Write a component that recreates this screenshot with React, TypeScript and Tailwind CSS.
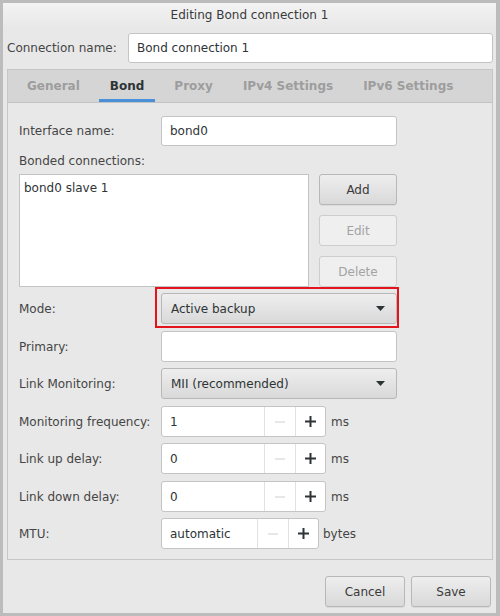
import React from 'react';

const tabs = ['General', 'Bond', 'Proxy', 'IPv4 Settings', 'IPv6 Settings'];

export default function App() {
  return (
    <div className="w-[500px] h-[616px] border-[3px] border-r-[4px] border-[#bcbcbc] bg-[#e8e8e8] flex flex-col font-['DejaVu_Sans',sans-serif] text-[12px] text-[#2e3436]">
      {/* Title bar */}
      <div className="h-[25px] shrink-0 flex items-center justify-center pb-[2px] bg-linear-to-b from-[#f3f3f3] to-[#e8e8e8] text-[#3a3a3a]">
        Editing Bond connection 1
      </div>

      {/* Connection name */}
      <div className="mt-[5px] ml-[4px] mr-[3px] flex items-center h-[30px] shrink-0">
        <div className="w-[121px] text-[#454545]">Connection name:</div>
        <div className="flex-1 h-full flex items-center px-[8px] bg-white border border-[#c4c4c4] rounded-[3px]">
          Bond connection 1
        </div>
      </div>

      {/* Notebook */}
      <div className="mt-[6px] ml-[4px] mr-[3px] flex-1 flex flex-col border border-[#c6c6c6]">
        <div className="h-[33px] shrink-0 flex items-stretch pl-[8px] gap-[8px] bg-[#d5d5d5] border-b border-[#c2c2c2]">
          {tabs.map((t) => (
            <div
              key={t}
              className={
                t === 'Bond'
                  ? 'px-[11px] flex items-center font-bold text-[#2e3436] border-b-[3px] border-[#4a90d9] pt-[3px]'
                  : 'px-[11px] flex items-center font-bold text-[#9d9d9d]'
              }
            >
              {t}
            </div>
          ))}
        </div>

        <div className="flex-1 pt-[13px] pl-[11px] text-[#454545]">
          <Row label="Interface name:" h="h-[30px]">
            <TextBox value="bond0" className="w-[236px]" />
          </Row>

          <div className="mt-[6px] h-[18px] flex items-center">Bonded connections:</div>

          <div className="mt-[4px] flex">
            <div className="w-[290px] h-[113px] bg-white border border-[#c4c4c4] pl-[4px] pt-[4px] text-[#2e3436]">
              bond0 slave 1
            </div>
            <div className="ml-[10px] w-[78px] flex flex-col gap-[10px]">
              <Button label="Add" className="h-[31px]" />
              <Button label="Edit" className="h-[31px]" disabled />
              <Button label="Delete" className="h-[31px]" disabled />
            </div>
          </div>

          <Row label="Mode:" className="mt-[6px]">
            <div className="relative w-[236px] h-full">
              <Combo value="Active backup" />
              <div className="absolute -top-[6px] -left-[6px] -right-[2px] -bottom-[4px] border-2 border-[#e3141b] pointer-events-none" />
            </div>
          </Row>

          <Row label="Primary:" className="mt-[7px]">
            <TextBox value="" className="w-[236px]" />
          </Row>

          <Row label="Link Monitoring:" className="mt-[6px]">
            <div className="w-[236px] h-full">
              <Combo value="MII (recommended)" />
            </div>
          </Row>

          <Row label="Monitoring frequency:" className="mt-[7px]">
            <Spin value="1" unit="ms" />
          </Row>

          <Row label="Link up delay:" className="mt-[6px]">
            <Spin value="0" unit="ms" />
          </Row>

          <Row label="Link down delay:" className="mt-[7px]">
            <Spin value="0" unit="ms" />
          </Row>

          <Row label="MTU:" className="mt-[6px]">
            <Spin value="automatic" unit="bytes" />
          </Row>
        </div>
      </div>

      {/* Footer */}
      <div className="h-[53px] shrink-0 flex justify-end items-start pt-[16px] pr-[5px] gap-[6px]">
        <Button label="Cancel" className="w-[80px] h-[31px]" />
        <Button label="Save" className="w-[80px] h-[31px]" />
      </div>
    </div>
  );
}

function Row({ label, children, className = '', h = 'h-[31px]' }: any) {
  return (
    <div className={`flex items-center ${h} ${className}`}>
      <div className="w-[142px] shrink-0">{label}</div>
      {children}
    </div>
  );
}

function TextBox({ value, className = '' }: { value: string; className?: string }) {
  return (
    <div className={`h-full flex items-center pl-[8px] bg-white border border-[#c4c4c4] rounded-[3px] text-[#2e3436] ${className}`}>
      {value}
    </div>
  );
}

function Button({ label, className = '', disabled = false }: any) {
  return (
    <div
      className={
        disabled
          ? `flex items-center justify-center bg-[#efefef] border border-[#cdcdcd] rounded-[3px] text-[#a3a3a3] ${className}`
          : `flex items-center justify-center bg-linear-to-b from-[#eeeeee] to-[#d9d9d9] border border-[#b7b7b7] rounded-[3px] text-[#3a3a3a] shadow-[0_1px_0_rgba(0,0,0,0.06)] ${className}`
      }
    >
      {label}
    </div>
  );
}

function Combo({ value }: { value: string }) {
  return (
    <div className="w-full h-full flex items-center justify-between pl-[9px] pr-[11px] bg-linear-to-b from-[#eeeeee] to-[#d9d9d9] border border-[#b7b7b7] rounded-[3px] text-[#2e3436]">
      <span>{value}</span>
      <svg width="9" height="5" viewBox="0 0 9 5">
        <path d="M0 0h9L4.5 5z" fill="#2e3436" />
      </svg>
    </div>
  );
}

function Spin({ value, unit }: { value: string; unit: string }) {
  const isMtu = unit === 'bytes';
  return (
    <div className="flex items-center h-full">
      <div className="flex h-full bg-white border border-[#c4c4c4] rounded-[3px] text-[#2e3436]">
        <div className={`${isMtu ? 'w-[95px]' : 'w-[102px]'} flex items-center pl-[8px]`}>{value}</div>
        <div className="w-[31px] flex items-center justify-center border-l border-[#e2e2e2]">
          <svg width="10" height="2" viewBox="0 0 10 2">
            <rect x="0" y="0.5" width="10" height="1" fill="#d0d0d0" />
          </svg>
        </div>
        <div className="w-[30px] flex items-center justify-center border-l border-[#e2e2e2]">
          <svg width="11" height="11" viewBox="0 0 11 11">
            <rect x="0" y="4.5" width="11" height="2" fill="#2e3436" />
            <rect x="4.5" y="0" width="2" height="11" fill="#2e3436" />
          </svg>
        </div>
      </div>
      <span className={`${isMtu ? 'ml-[4px]' : 'ml-[5px]'} text-[#454545]`}>{unit}</span>
    </div>
  );
}
